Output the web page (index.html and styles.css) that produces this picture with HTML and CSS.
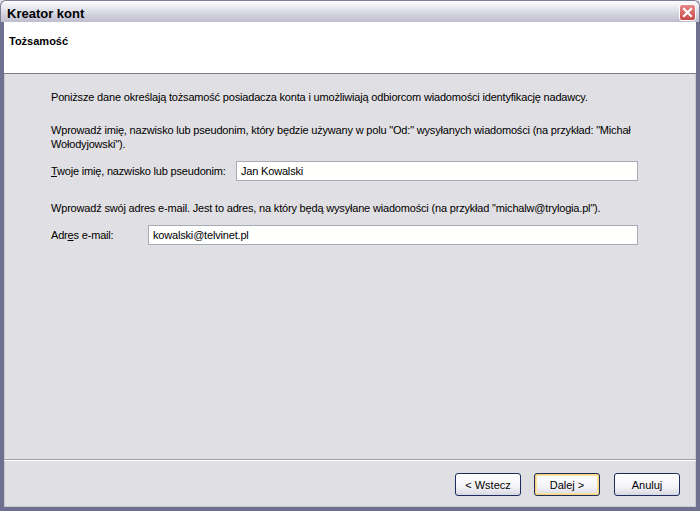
FILE: index.html
```html
<!DOCTYPE html>
<html lang="pl">
<head>
    <meta charset="UTF-8">
    <title>Kreator kont</title>
    <link rel="stylesheet" href="styles.css">
</head>
<body>

    <div class="window">
        <div class="titlebar">
            <span class="title">Kreator kont</span>
            <div class="close-btn">
                <svg width="11" height="11" viewBox="0 0 11 11">
                    <path d="M2 2 L9 9 M9 2 L2 9" stroke="#fff" stroke-width="2.2" stroke-linecap="square"/>
                </svg>
            </div>
        </div>

        <div class="frame">
            <div class="header">
                <h1>Tożsamość</h1>
            </div>

            <div class="content">
                <p class="intro">Poniższe dane określają tożsamość posiadacza konta i umożliwiają odbiorcom wiadomości identyfikację nadawcy.</p>

                <p class="desc">Wprowadź imię, nazwisko lub pseudonim, który będzie używany w polu "Od:" wysyłanych wiadomości (na przykład: "Michał Wołodyjowski").</p>
                <div class="field-row">
                    <label class="label-name"><u>T</u>woje imię, nazwisko lub pseudonim:</label>
                    <input type="text" class="text-input" value="Jan Kowalski">
                </div>

                <p class="desc">Wprowadź swój adres e-mail. Jest to adres, na który będą wysyłane wiadomości (na przykład "michalw@trylogia.pl").</p>
                <div class="field-row">
                    <label class="label-email">Adr<u>e</u>s e-mail:</label>
                    <input type="text" class="text-input" value="kowalski@telvinet.pl">
                </div>
            </div>

            <div class="footer">
                <button class="btn">&lt; Wstecz</button>
                <button class="btn btn-default">Dalej &gt;</button>
                <button class="btn btn-last">Anuluj</button>
            </div>
        </div>
    </div>

</body>
</html>
```

FILE: styles.css
```css
html, body {
    margin: 0;
    padding: 0;
}

body {
    width: 700px;
    height: 511px;
    overflow: hidden;
    font-family: 'Liberation Sans', Arial, sans-serif;
    font-size: 11px;
    color: #000;
}

.window {
    width: 700px;
    height: 511px;
    box-sizing: border-box;
    display: flex;
    flex-direction: column;
    background-color: #e0dfe3;
}

/* pasek tytułu */
.titlebar {
    height: 22px;
    flex-shrink: 0;
    display: flex;
    align-items: center;
    justify-content: space-between;
    padding: 0 3px 0 6px;
    box-sizing: border-box;
    border: 1px solid #7d7d98;
    border-bottom: none;
    border-radius: 6px 6px 0 0;
    background: linear-gradient(to bottom, #fdfdfd 0%, #e6e6ee 35%, #cfcfdc 70%, #bdbdcd 100%);
}

.title {
    font-weight: bold;
    font-size: 13px;
    color: #000;
    padding-top: 3px;
}

.close-btn {
    width: 17px;
    height: 17px;
    box-sizing: border-box;
    border: 1px solid #fff;
    border-radius: 3px;
    background: linear-gradient(to bottom, #e98888, #c84848);
    display: flex;
    align-items: center;
    justify-content: center;
    margin-top: 2px;
}

.frame {
    flex: 1;
    display: flex;
    flex-direction: column;
    border: 4px solid #6f6f90;
    border-top: none;
    box-shadow: inset 1px 0 0 #c9c9d6, inset -1px 0 0 #c9c9d6, inset 0 -1px 0 #c9c9d6;
}

.header {
    height: 52px;
    flex-shrink: 0;
    background-color: #fff;
    border-bottom: 1px solid #7d7d7d;
    box-sizing: border-box;
    padding: 13px 0 0 5px;
}

.header h1 {
    margin: 0;
    font-size: 11px;
    font-weight: bold;
}

.content {
    flex: 1;
    padding: 16px 58px 0 47px;
    letter-spacing: -0.18px;
}

.content p {
    margin: 0;
    line-height: 14px;
}

.intro {
    margin-bottom: 19px !important;
}

.desc {
    margin-bottom: 10px !important;
}

.field-row {
    display: flex;
    align-items: center;
    margin-bottom: 20px;
}

.label-name {
    width: 185px;
}

.label-email {
    width: 97px;
}

.text-input {
    flex: 1;
    height: 20px;
    box-sizing: border-box;
    border: 1px solid #a5acb5;
    background-color: #fffffe;
    font-family: 'Liberation Sans', Arial, sans-serif;
    font-size: 11px;
    letter-spacing: -0.18px;
    padding: 0 4px;
    margin: 0;
    outline: none;
}

.footer {
    height: 48px;
    flex-shrink: 0;
    border-top: 1px solid #a0a0a4;
    box-shadow: inset 0 1px 0 #fff;
    display: flex;
    justify-content: flex-end;
    align-items: flex-start;
    padding: 13px 16px 0 0;
    box-sizing: border-box;
}

.btn {
    width: 66px;
    height: 23px;
    margin-left: 13px;
    box-sizing: border-box;
    border: 1px solid #1c2c5c;
    border-radius: 3px;
    background: linear-gradient(to bottom, #ffffff 0%, #f4f4f8 60%, #d8d8e2 100%);
    font-family: 'Liberation Sans', Arial, sans-serif;
    font-size: 11px;
    color: #000;
    padding: 0;
}

.btn-default {
    box-shadow: inset 0 0 0 1px #f8d27c, inset 0 0 0 2px #fbe3a4;
}

.btn-last {
    margin-left: 14px;
}
```
